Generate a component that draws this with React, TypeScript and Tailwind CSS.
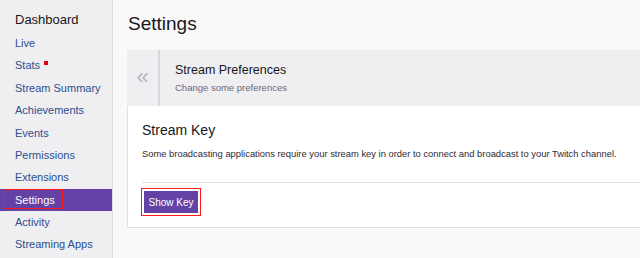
const links = [
  "Live",
  "Stats",
  "Stream Summary",
  "Achievements",
  "Events",
  "Permissions",
  "Extensions",
  "Settings",
  "Activity",
  "Streaming Apps",
];

const App = () => {
  return (
    <div className="w-[640px] h-[258px] overflow-hidden flex bg-[#faf9fa] font-['Liberation_Sans',Arial,sans-serif]">
      <aside className="w-[113px] shrink-0 h-full bg-[#efeef1] border-r border-[#dcdbe0]">
        <div className="h-[32px] pl-[15px] pt-[12px] text-[13px] leading-[16px] text-[#19171c]">Dashboard</div>
        {links.map((l) => (
          <div
            key={l}
            className={
              l === "Settings"
                ? "relative h-[22.4px] flex items-center pl-[15px] text-[11px] bg-[#6441a4] text-white"
                : "relative h-[22.4px] flex items-center pl-[15px] text-[11px] text-[#2d4f8e]"
            }
          >
            {l}
            {l === "Stats" && <span className="ml-[4px] mb-[5px] w-[4px] h-[4px] bg-[#e0001b]" />}
            {l === "Settings" && (
              <span className="absolute left-[3px] top-0 w-[60px] h-[20px] border border-[#ff1a1a]" />
            )}
          </div>
        ))}
      </aside>
      <main className="flex-1 pl-[14px] pt-[12px] min-w-0">
        <h1 className="text-[19px] leading-[24px] text-[#19171c] pl-[1px]">Settings</h1>
        <div className="mt-[14px] -mr-[20px]">
          <div className="h-[56px] flex bg-[#efeef1]">
            <div className="w-[33px] shrink-0 border-r-2 border-[#dad8de] flex items-center justify-center text-[22px] text-[#b8b5c0] pb-[4px]">
              «
            </div>
            <div className="pl-[15px] pt-[12px]">
              <div className="text-[12.5px] leading-[16px] text-[#19171c]">Stream Preferences</div>
              <div className="text-[9.5px] leading-[12px] mt-[4px] text-[#6e6779]">Change some preferences</div>
            </div>
          </div>
          <div className="bg-white border border-[#e0dfe4] border-t-0 h-[122px] pl-[14px] pr-[15px]">
            <div className="pt-[16px] text-[14px] leading-[17px] text-[#19171c]">Stream Key</div>
            <p className="mt-[9px] whitespace-nowrap text-[9.4px] leading-[12px] text-[#2d2a33]">
              Some broadcasting applications require your stream key in order to connect and broadcast to your Twitch channel.
            </p>
            <div className="mt-[22px] border-t border-[#e3e2e6]" />
            <div className="mt-[5px] relative w-[60px] h-[28px] border border-[#ff1a1a] -ml-[1px] p-[2px]">
              <button className="w-full h-full bg-[#6441a4] text-white text-[10px] flex items-center justify-center">
                Show Key
              </button>
            </div>
          </div>
        </div>
      </main>
    </div>
  );
};

export default App;
